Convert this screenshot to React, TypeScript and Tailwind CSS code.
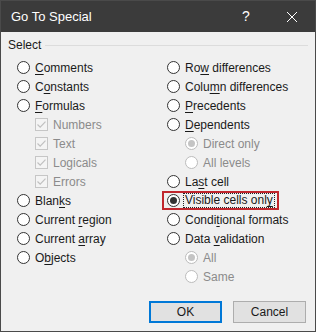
import type { ReactNode } from 'react'

const font = { fontFamily: '"Segoe UI", "Liberation Sans", Arial, sans-serif' }

function U({ children }: { children: ReactNode }) {
  return <span className="underline underline-offset-2">{children}</span>
}

function Radio({ checked, disabled }: { checked?: boolean; disabled?: boolean }) {
  return (
    <span
      className={
        'flex h-[13px] w-[13px] shrink-0 items-center justify-center rounded-full border bg-white ' +
        (disabled ? 'border-[#bcbcbc] bg-[#f7f7f7]' : 'border-[#333333]')
      }
    >
      {checked && (
        <span className={'h-[7px] w-[7px] rounded-full ' + (disabled ? 'bg-[#c4c4c4]' : 'bg-[#333333]')} />
      )}
    </span>
  )
}

function Check() {
  return (
    <span className="flex h-[13px] w-[13px] shrink-0 items-center justify-center border border-[#c6c6c6] bg-[#f4f4f4]">
      <svg width="11" height="11" viewBox="0 0 11 11" fill="none">
        <path d="M1.5 5.5 L4.2 8.2 L9.5 2.6" stroke="#c0c0c0" strokeWidth="1.2" />
      </svg>
    </span>
  )
}

function Row({
  children,
  indent,
  sub,
  check,
  checked,
}: {
  children: ReactNode
  indent?: boolean
  sub?: boolean
  check?: boolean
  checked?: boolean
}) {
  const dim = sub || check
  return (
    <div className={'flex h-[19px] items-center gap-[5px] whitespace-nowrap ' + (indent ? 'pl-[18px]' : '')}>
      {check ? <Check /> : <Radio checked={checked} disabled={sub} />}
      <span className={dim ? 'text-[#8b8b8b]' : 'text-[#1a1a1a]'}>{children}</span>
    </div>
  )
}

export default function App() {
  return (
    <div className="flex h-[332px] w-[316px] flex-col border border-[#4a4a4a] bg-[#f0f0f0] text-[12px]" style={font}>
      <div className="flex h-[31px] shrink-0 items-center bg-[#3b3b3b] pl-[10px] text-[13px] text-white">
        <span className="flex-1">Go To Special</span>
        <span className="w-[46px] text-center text-[14px]">?</span>
        <span className="flex w-[46px] items-center justify-center">
          <svg width="12" height="12" viewBox="0 0 12 12">
            <path d="M1 1 L11 11 M11 1 L1 11" stroke="#ffffff" strokeWidth="1" />
          </svg>
        </span>
      </div>

      <div className="flex flex-1 flex-col px-[7px] pt-[4px]">
        <div className="flex h-[18px] items-center gap-[4px]">
          <span className="text-[#1a1a1a]">Select</span>
          <span className="h-px flex-1 bg-[#dcdcdc]" />
        </div>

        <div className="mt-[4px] grid grid-cols-[150px_1fr] pl-[9px]">
          <div className="flex flex-col">
            <Row>
              <U>C</U>omments
            </Row>
            <Row>
              C<U>o</U>nstants
            </Row>
            <Row>
              <U>F</U>ormulas
            </Row>
            <Row indent check>
              Numbers
            </Row>
            <Row indent check>
              Text
            </Row>
            <Row indent check>
              Logicals
            </Row>
            <Row indent check>
              Errors
            </Row>
            <Row>
              Blan<U>k</U>s
            </Row>
            <Row>
              Current <U>r</U>egion
            </Row>
            <Row>
              Current <U>a</U>rray
            </Row>
            <Row>
              O<U>b</U>jects
            </Row>
          </div>

          <div className="flex flex-col">
            <Row>
              Ro<U>w</U> differences
            </Row>
            <Row>
              Colu<U>m</U>n differences
            </Row>
            <Row>
              <U>P</U>recedents
            </Row>
            <Row>
              <U>D</U>ependents
            </Row>
            <Row indent sub checked>
              Direct only
            </Row>
            <Row indent sub>
              All levels
            </Row>
            <Row>
              La<U>s</U>t cell
            </Row>
            <div className="-ml-[5px] flex h-[19px] w-[117px] items-center border-2 border-[#c0262d] pl-[3px]">
              <div className="flex items-center gap-[3px] whitespace-nowrap">
                <Radio checked />
                <span className="border border-dotted border-[#222] px-px leading-[13px] text-[#1a1a1a]">
                  Visible cells onl<U>y</U>
                </span>
              </div>
            </div>
            <Row>
              Condi<U>t</U>ional formats
            </Row>
            <Row>
              Data <U>v</U>alidation
            </Row>
            <Row indent sub checked>
              All
            </Row>
            <Row indent sub>
              Same
            </Row>
          </div>
        </div>

        <div className="mt-auto mb-[8px] flex justify-end gap-[11px] pr-[2px]">
          <button className="h-[22px] w-[73px] border-2 border-[#0078d7] bg-[#e1e1e1] text-[#1a1a1a]">OK</button>
          <button className="h-[22px] w-[73px] border border-[#adadad] bg-[#e1e1e1] text-[#1a1a1a]">Cancel</button>
        </div>
      </div>
    </div>
  )
}
